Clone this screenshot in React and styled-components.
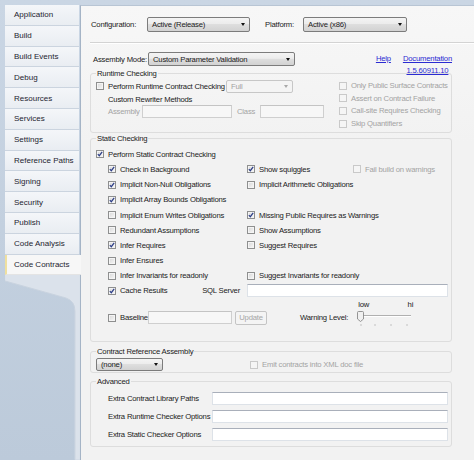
import React from 'react';
import styled, { createGlobalStyle } from 'styled-components';

const GlobalStyle = createGlobalStyle`
  html, body {
    margin: 0;
    padding: 0;
    background: #c6d2e0;
  }
  body {
    font-family: "Liberation Sans", Arial, sans-serif;
  }
`;

const tabs = [
  'Application', 'Build', 'Build Events', 'Debug', 'Resources', 'Services', 'Settings',
  'Reference Paths', 'Signing', 'Security', 'Publish', 'Code Analysis', 'Code Contracts',
];

const staticRows = [
  [{ label: 'Check in Background', checked: true }, { label: 'Show squiggles', checked: true }, { label: 'Fail build on warnings', disabled: true }],
  [{ label: 'Implicit Non-Null Obligations', checked: true }, { label: 'Implicit Arithmetic Obligations' }, null],
  [{ label: 'Implicit Array Bounds Obligations', checked: true }, null, null],
  [{ label: 'Implicit Enum Writes Obligations' }, { label: 'Missing Public Requires as Warnings', checked: true }, null],
  [{ label: 'Redundant Assumptions' }, { label: 'Show Assumptions' }, null],
  [{ label: 'Infer Requires', checked: true }, { label: 'Suggest Requires' }, null],
  [{ label: 'Infer Ensures' }, null, null],
  [{ label: 'Infer Invariants for readonly' }, { label: 'Suggest Invariants for readonly' }, null],
];

const Frame = styled.div`
  width: 474px;
  height: 460px;
  overflow: hidden;
  display: flex;
  flex-direction: column;
  background: linear-gradient(#cad6e4, #bccada);
  font-size: 7.7px;
  letter-spacing: -0.2px;
  color: #1a1a1a;
`;

const TopStrip = styled.div`
  height: 5px;
  flex: none;
`;

const Body = styled.div`
  flex: 1;
  display: flex;
  min-height: 0;
`;

const Sidebar = styled.nav`
  width: 80px;
  flex: none;
  box-sizing: border-box;
  padding-left: 5px;
  display: flex;
  flex-direction: column;
`;

const TabList = styled.ul`
  list-style: none;
  margin: 0;
  padding: 0;
`;

const Tab = styled.li`
  height: 20.8px;
  box-sizing: border-box;
  display: flex;
  align-items: center;
  padding-left: ${p => (p.$active ? '7px' : '9px')};
  font-size: 8px;
  letter-spacing: 0;
  color: #1d2430;
  background: ${p => (p.$active ? '#f7f7f7' : 'linear-gradient(#f4f6f9, #e9edf2)')};
  border-bottom: 1px solid ${p => (p.$active ? '#e4e4e4' : '#cbd4df')};
  border-left: ${p => (p.$active ? '2px solid #efe0a0' : 'none')};
  margin-right: ${p => (p.$active ? '-1px' : '1px')};
  position: relative;
  z-index: 1;
`;

const Tail = styled.svg`
  display: block;
  width: 75px;
  height: 185px;
`;

const Panel = styled.main`
  flex: 1;
  box-sizing: border-box;
  background: linear-gradient(#f7f7f7, #f2f2f2 30%);
  border-left: 1px solid #a5b4c6;
  border-top: 1px solid #b8c5d4;
  padding-left: 9px;
  display: flex;
  flex-direction: column;
`;

const ConfigRow = styled.div`
  display: flex;
  align-items: center;
  height: 15px;
  margin-top: 11px;
  padding-left: 1px;
`;

const RowLabel = styled.span`
  width: ${p => p.$w}px;
  margin-left: ${p => p.$ml || 0}px;
  flex: none;
  white-space: nowrap;
  color: ${p => (p.$disabled ? '#a3a3a3' : 'inherit')};
`;

const Separator = styled.div`
  height: 1px;
  margin-top: 10px;
  background: #d3d3d3;
  border-bottom: 1px solid #fff;
`;

const AssemblyRow = styled.div`
  display: flex;
  align-items: flex-start;
  margin-top: 8px;
  padding-left: 3px;
  padding-right: 22px;
  height: 14px;
`;

const ModeLine = styled.div`
  display: flex;
  align-items: center;
  height: 14px;
`;

const Links = styled.div`
  margin-left: auto;
  display: flex;
  gap: 12px;
  line-height: 12px;
  margin-top: 1px;
`;

const LinkStack = styled.div`
  display: flex;
  flex-direction: column;
  align-items: center;
`;

const Link = styled.a`
  color: #2b2bd2;
  text-decoration: underline;
  white-space: nowrap;
`;

const Group = styled.fieldset`
  width: 362px;
  box-sizing: border-box;
  margin: ${p => p.$mt || 0}px 0 0 0;
  padding: 0 3px ${p => p.$pb || 2}px 5px;
  border: 1px solid #dddddd;
  border-radius: 3px;
  min-width: 0;
`;

const Legend = styled.legend`
  padding: 0 1px;
  line-height: 9px;
`;

const RuntimeBody = styled.div`
  display: flex;
`;

const RuntimeMain = styled.div`
  width: 243px;
  flex: none;
  padding-top: 1px;
`;

const RuntimeOptions = styled.div`
  display: flex;
  flex-direction: column;
  padding-top: 1.5px;
`;

const OptionRow = styled.div`
  height: 12.6px;
  display: flex;
  align-items: center;
`;

const Line = styled.div`
  display: flex;
  align-items: center;
  height: ${p => p.$h || 13}px;
  padding-left: ${p => p.$indent || 0}px;
`;

const Item = styled.label`
  display: flex;
  align-items: center;
  gap: 4px;
  white-space: nowrap;
  width: ${p => (p.$w ? `${p.$w}px` : 'auto')};
  flex: none;
  color: ${p => (p.$disabled ? '#a3a3a3' : 'inherit')};
`;

const Box = styled.span`
  width: 8px;
  height: 8px;
  box-sizing: border-box;
  flex: none;
  display: flex;
  align-items: center;
  justify-content: center;
  border: 1px solid ${p => (p.$disabled ? '#c9c9c9' : '#8e8f8f')};
  background: ${p => (p.$disabled ? '#f5f5f5' : 'linear-gradient(135deg, #d6d6d6, #f8f8f8)')};
  box-shadow: inset 0 0 0 1px ${p => (p.$disabled ? '#f5f5f5' : '#f4f4f4')};
`;

const Select = styled.div`
  width: ${p => p.$w}px;
  height: ${p => p.$h || 14}px;
  flex: none;
  box-sizing: border-box;
  display: flex;
  align-items: center;
  padding: 0 0 0 4px;
  border: 1px solid ${p => (p.$disabled ? '#c7c7c7' : '#7c7c7c')};
  border-radius: 2px;
  background: ${p => (p.$disabled
    ? '#f4f4f4'
    : 'linear-gradient(#f4f4f4, #ececec 45%, #dedede 50%, #d2d2d2)')};
  color: ${p => (p.$disabled ? '#a3a3a3' : 'inherit')};
  margin-left: ${p => p.$ml || 0}px;
  white-space: nowrap;
`;

const Arrow = styled.span`
  margin-left: auto;
  margin-right: 4px;
  width: 0;
  height: 0;
  border-left: 2.5px solid transparent;
  border-right: 2.5px solid transparent;
  border-top: 3px solid ${p => (p.$disabled ? '#a8a8a8' : '#111')};
`;

const TextBox = styled.div`
  width: ${p => p.$w}px;
  height: 13px;
  flex: none;
  box-sizing: border-box;
  border: 1px solid ${p => (p.$disabled ? '#cfcfcf' : '#dde2e8')};
  border-top-color: ${p => (p.$disabled ? '#c4c4c4' : '#a9afba')};
  background: ${p => (p.$disabled ? '#f7f7f7' : '#fff')};
  margin-left: ${p => p.$ml || 0}px;
`;

const StaticTop = styled.div`
  height: 15px;
  margin-top: 4px;
  display: flex;
  align-items: center;
`;

const StaticGrid = styled.div`
  display: grid;
  grid-template-columns: 139px 106px 1fr;
  grid-auto-rows: 15.2px;
  align-items: center;
  padding-left: 12px;
`;

const SqlCell = styled.div`
  display: flex;
  align-items: center;
  justify-content: space-between;
  padding-right: 7px;
`;

const SqlInput = styled.div`
  grid-column: 2 / 4;
  display: flex;
`;

const BottomRow = styled.div`
  display: flex;
  align-items: flex-start;
  margin-top: 1px;
  padding-left: 12px;
`;

const BaselineGroup = styled.div`
  display: flex;
  align-items: center;
  height: 14px;
  margin-top: 11px;
`;

const Button = styled.div`
  width: 32px;
  height: 14px;
  box-sizing: border-box;
  margin-left: 3px;
  display: flex;
  align-items: center;
  justify-content: center;
  border: 1px solid #c4c4c4;
  border-radius: 2px;
  background: #f4f4f4;
  color: #a6a6a6;
`;

const WarnLabel = styled.span`
  margin: 13px 0 0 33px;
  line-height: 9px;
  white-space: nowrap;
`;

const SliderBlock = styled.div`
  width: 60px;
  margin-left: 8px;
  display: flex;
  flex-direction: column;
`;

const SliderLabels = styled.div`
  display: flex;
  justify-content: space-between;
  line-height: 10px;
  padding: 0 3px 0 2px;
`;

const Slider = styled.svg`
  display: block;
  width: 60px;
  height: 17px;
`;

const ReferenceLine = styled.div`
  display: flex;
  align-items: center;
  height: 13px;
  margin-top: 2.5px;
`;

const AdvancedRows = styled.div`
  display: flex;
  flex-direction: column;
  gap: 5px;
  margin-top: 6px;
  padding-left: 12px;
`;

function Check({ checked, disabled }) {
  return (
    <Box $disabled={disabled}>
      {checked && (
        <svg width="6" height="6" viewBox="0 0 6 6">
          <path d="M0.8 3.1 L2.3 4.7 L5.2 0.9" fill="none" stroke="#2b3d86" strokeWidth="1.2" />
        </svg>
      )}
    </Box>
  );
}

function CheckItem({ label, checked, disabled, w }) {
  return (
    <Item $disabled={disabled} $w={w}>
      <Check checked={checked} disabled={disabled} />
      {label}
    </Item>
  );
}

function Combo({ w, h, ml, disabled, children }) {
  return (
    <Select $w={w} $h={h} $ml={ml} $disabled={disabled}>
      {children}
      <Arrow $disabled={disabled} />
    </Select>
  );
}

export default function App() {
  return (
    <>
      <GlobalStyle />
      <Frame>
        <TopStrip />
        <Body>
          <Sidebar>
            <TabList>
              {tabs.map(t => (
                <Tab key={t} $active={t === 'Code Contracts'}>{t}</Tab>
              ))}
            </TabList>
            <Tail viewBox="0 0 75 185">
              <path d="M0 0 H75 V185 H70 V36 Q70 26 61 23 L0 6 Z" fill="#dbe2eb" />
              <path d="M0 6 L61 23 Q70 26 70 36 V185" fill="none" stroke="#c9d3df" strokeWidth="1" />
            </Tail>
          </Sidebar>

          <Panel>
            <ConfigRow>
              <RowLabel $w={56}>Configuration:</RowLabel>
              <Combo w={103} h={15}>Active (Release)</Combo>
              <RowLabel $w={38} $ml={15}>Platform:</RowLabel>
              <Combo w={104} h={15}>Active (x86)</Combo>
            </ConfigRow>
            <Separator />

            <AssemblyRow>
              <ModeLine>
                <RowLabel $w={55}>Assembly Mode:</RowLabel>
                <Combo w={147}>Custom Parameter Validation</Combo>
              </ModeLine>
              <Links>
                <Link>Help</Link>
                <LinkStack>
                  <Link>Documentation</Link>
                  <Link>1.5.60911.10</Link>
                </LinkStack>
              </Links>
            </AssemblyRow>

            <Group $mt={3} $pb={2}>
              <Legend>Runtime Checking</Legend>
              <RuntimeBody>
                <RuntimeMain>
                  <Line $h={14}>
                    <CheckItem label="Perform Runtime Contract Checking" w={130} />
                    <Combo w={67} h={13} disabled>Full</Combo>
                  </Line>
                  <Line $h={12} $indent={12}>Custom Rewriter Methods</Line>
                  <Line $h={13} $indent={12}>
                    <RowLabel $w={34} $disabled>Assembly</RowLabel>
                    <TextBox $w={90} $disabled />
                    <RowLabel $w={23} $ml={5} $disabled>Class</RowLabel>
                    <TextBox $w={64} $disabled />
                  </Line>
                </RuntimeMain>
                <RuntimeOptions>
                  {['Only Public Surface Contracts', 'Assert on Contract Failure', 'Call-site Requires Checking', 'Skip Quantifiers'].map(l => (
                    <OptionRow key={l}>
                      <CheckItem label={l} disabled />
                    </OptionRow>
                  ))}
                </RuntimeOptions>
              </RuntimeBody>
            </Group>

            <Group $mt={1} $pb={14}>
              <Legend>Static Checking</Legend>
              <StaticTop>
                <CheckItem label="Perform Static Contract Checking" checked />
              </StaticTop>
              <StaticGrid>
                {staticRows.map((row, i) =>
                  row.map((cell, j) =>
                    cell ? <CheckItem key={`${i}-${j}`} {...cell} /> : <span key={`${i}-${j}`} />
                  )
                )}
                <SqlCell>
                  <CheckItem label="Cache Results" checked />
                  <span>SQL Server</span>
                </SqlCell>
                <SqlInput>
                  <TextBox $w={201} />
                </SqlInput>
              </StaticGrid>
              <BottomRow>
                <BaselineGroup>
                  <CheckItem label="Baseline" w={40} />
                  <TextBox $w={84} $disabled />
                  <Button>Update</Button>
                </BaselineGroup>
                <WarnLabel>Warning Level:</WarnLabel>
                <SliderBlock>
                  <SliderLabels>
                    <span>low</span>
                    <span>hi</span>
                  </SliderLabels>
                  <Slider viewBox="0 0 60 17">
                    <line x1="4" y1="5.5" x2="55" y2="5.5" stroke="#b0b0b0" strokeWidth="1" />
                    <line x1="4" y1="6.5" x2="55" y2="6.5" stroke="#ffffff" strokeWidth="1" />
                    {[5, 19, 35, 51].map(x => (
                      <line key={x} x1={x} y1="14" x2={x} y2="16" stroke="#b5b5b5" strokeWidth="0.8" />
                    ))}
                    <path d="M1.5 2.5 Q1.5 1.5 2.5 1.5 H6.5 Q7.5 1.5 7.5 2.5 V9 L4.5 11.5 L1.5 9 Z" fill="#f0f0f0" stroke="#7d7d7d" strokeWidth="0.8" />
                  </Slider>
                </SliderBlock>
              </BottomRow>
            </Group>

            <Group $mt={5} $pb={1}>
              <Legend>Contract Reference Assembly</Legend>
              <ReferenceLine>
                <Combo w={67} h={13}>(none)</Combo>
                <Item $disabled style={{ marginLeft: 87 }}>
                  <Check disabled />
                  Emit contracts into XML doc file
                </Item>
              </ReferenceLine>
            </Group>

            <Group $mt={4} $pb={5}>
              <Legend>Advanced</Legend>
              <AdvancedRows>
                {['Extra Contract Library Paths', 'Extra Runtime Checker Options', 'Extra Static Checker Options'].map(l => (
                  <Line key={l} $h={13}>
                    <RowLabel $w={104}>{l}</RowLabel>
                    <TextBox $w={236} />
                  </Line>
                ))}
              </AdvancedRows>
            </Group>
          </Panel>
        </Body>
      </Frame>
    </>
  );
}
